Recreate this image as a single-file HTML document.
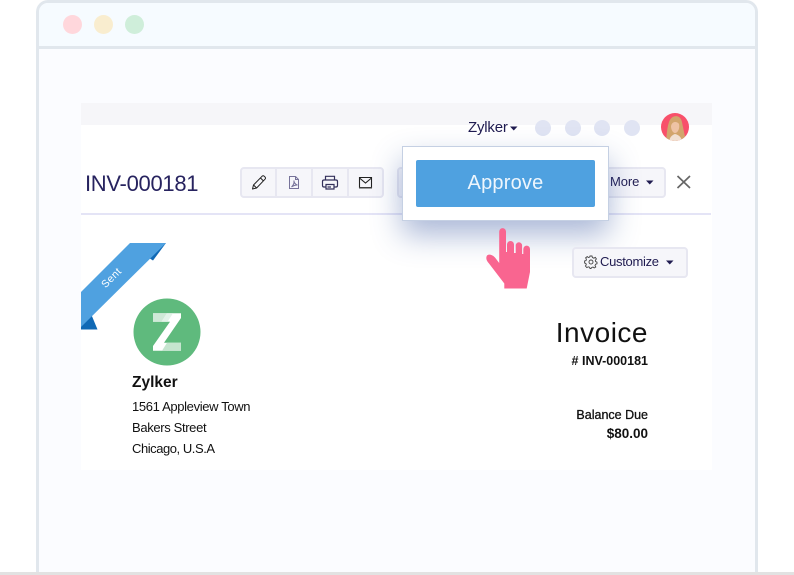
<!DOCTYPE html>
<html><head><meta charset="utf-8"><style>
html,body{margin:0;padding:0;background:#fff;width:794px;height:575px;overflow:hidden}
body{position:relative;font-family:"Liberation Sans",sans-serif}
div,span{position:absolute;box-sizing:border-box}
.t{white-space:nowrap;line-height:1}
.btn{background:#f6f6fa;border:2px solid #e7e7f1;border-radius:4px}
</style></head><body>
<div style="left:36px;top:0;width:722px;height:575px;background:#fbfcff;border:3px solid #e1e7ed;border-bottom:none;border-radius:12px 12px 0 0;overflow:hidden">
<div style="left:0;top:0;width:716px;height:43px;background:#f6fbff"></div>
<div style="left:0;top:43px;width:716px;height:3px;background:#e1e7ed"></div>
</div>
<div style="left:63px;top:15px;width:19px;height:19px;border-radius:50%;background:#ffd7dc"></div>
<div style="left:94px;top:15px;width:19px;height:19px;border-radius:50%;background:#f9edcf"></div>
<div style="left:125px;top:15px;width:19px;height:19px;border-radius:50%;background:#cfeeda"></div>
<div style="left:0;top:572px;width:794px;height:3px;background:#e2e2e2"></div>

<div style="left:81px;top:103px;width:631px;height:367px;background:#fff"></div>
<div style="left:81px;top:103px;width:631px;height:22px;background:#f6f6f9"></div>
<div style="left:81px;top:213px;width:630px;height:2px;background:#e4e4f6"></div>

<div class="t" style="left:468px;top:120px;font-size:15px;color:#1f1b50;letter-spacing:-.2px">Zylker</div>
<svg style="position:absolute;left:510px;top:126px" width="8" height="5"><path d="M0 0.5H7.5L3.75 4.5Z" fill="#1f1b50"/></svg>
<div style="left:535px;top:120px;width:16px;height:16px;border-radius:50%;background:#e0e4f3"></div>
<div style="left:565px;top:120px;width:16px;height:16px;border-radius:50%;background:#e0e4f3"></div>
<div style="left:594px;top:120px;width:16px;height:16px;border-radius:50%;background:#e0e4f3"></div>
<div style="left:624px;top:120px;width:16px;height:16px;border-radius:50%;background:#e0e4f3"></div>
<svg style="position:absolute;left:661px;top:113px" width="28" height="28" viewBox="0 0 28 28">
<defs><clipPath id="c"><circle cx="14" cy="14" r="14"/></clipPath></defs>
<g clip-path="url(#c)"><rect width="28" height="28" fill="#f8506a"/>
<path d="M5 28C6 20 6 15 8 9C10 3 15 2 18 4C21 6 21 10 22 14C23 19 24 24 25 28Z" fill="#d2a56c"/>
<path d="M10 13C11 8 16 8 18 11C19 15 17 20 14 20C12 20 10 17 10 13Z" fill="#eec3a4"/>
<path d="M8 28C9 24 11 22 14 21C18 22 20 24 21 28Z" fill="#f1e0d2"/></g></svg>

<div class="t" style="left:85px;top:173px;font-size:22px;color:#27235f;letter-spacing:-.3px">INV-000181</div>

<div class="btn" style="left:240px;top:167px;width:144px;height:31px"></div>
<div style="left:275px;top:168px;width:2px;height:29px;background:#e7e7f1"></div>
<div style="left:311px;top:168px;width:2px;height:29px;background:#e7e7f1"></div>
<div style="left:347px;top:168px;width:2px;height:29px;background:#e7e7f1"></div>
<svg style="position:absolute;left:240px;top:167px" width="144" height="31" viewBox="0 0 144 31" fill="none">
<path d="M12.5 22L13.5 18L22 9.3C22.8 8.6 23.6 8.6 24.3 9.3L25 10C25.7 10.7 25.7 11.5 25 12.2L16.6 21ZM20.5 11L23.5 14M13.5 18L16.6 21" stroke="#222" stroke-width="1" stroke-linejoin="round"/>
<path d="M49.5 9.5H55.5L58.5 12.5V21.5H49.5ZM55.5 9.5V12.5H58.5M51.5 20C53.5 18 54.5 15.5 53.8 13.5C54.2 16 55.5 17.5 57.5 18C55.5 18 53.5 18.5 51.5 20Z" stroke="#77739a" stroke-width="1"/>
<path d="M85.5 13V9.3H94.5V13M85.5 20H84C83 20 82.5 19.5 82.5 18.5V14.5C82.5 13.5 83 13 84 13H96C97 13 97.5 13.5 97.5 14.5V18.5C97.5 19.5 97 20 96 20H94.5M86 17.5H94V22H86ZM87.5 20H91" stroke="#33305a" stroke-width="1.2"/>
<path d="M119.5 10.5H131.5V20.5H119.5ZM119.5 11L125.5 16L131.5 11" stroke="#222" stroke-width="1.1"/><path d="M119 20.8H132" stroke="#444" stroke-width="1.4"/>
</svg>

<div class="btn" style="left:397px;top:167px;width:30px;height:31px"></div>
<div class="btn" style="left:590px;top:167px;width:76px;height:31px"></div>
<div class="t" style="left:610px;top:175px;font-size:13px;color:#1f1b50;letter-spacing:-.1px">More</div>
<svg style="position:absolute;left:646px;top:180px" width="8" height="5"><path d="M0 .5H7.5L3.75 4.5Z" fill="#1f1b50"/></svg>
<svg style="position:absolute;left:676px;top:174px" width="15" height="15"><path d="M1.5 2L14 14M14 2L1.5 14" stroke="#666" stroke-width="1.7"/></svg>

<div style="left:402px;top:146px;width:207px;height:75px;background:#fff;border:1px solid #c5d0e3;box-shadow:0 14px 30px rgba(55,85,160,.42)"></div>
<div style="left:416px;top:160px;width:179px;height:47px;background:#4fa1e0;border-radius:2px"></div>
<div class="t" style="left:416px;top:173px;width:179px;text-align:center;font-size:20px;color:#eef6fd;letter-spacing:.2px">Approve</div>

<svg style="position:absolute;left:480px;top:222px" width="60" height="70" viewBox="480 222 60 70">
<path d="M499.2 231.5a3.4 3.4 0 0 1 6.8 0V252H507V244.5a3.5 3.5 0 0 1 7 0V253H515.7V245.5a3.2 3.2 0 0 1 6.4 0V254H523.3V249a3.35 3.35 0 0 1 6.7 0V272L526.7 288.5H504.3V283.5L489 263.5C486.5 261 485.5 258 487 255.5C489 253.5 493 255 495 257.5L499.2 263Z" fill="#f96590"/></svg>

<div class="btn" style="left:572px;top:247px;width:116px;height:31px"></div>
<svg style="position:absolute;left:584px;top:255px" width="14" height="14" viewBox="0 0 14 14" fill="none" stroke="#444" stroke-width=".9"><circle cx="7" cy="7" r="2"/><path d="M6 1H8L8.4 2.6L9.9 3.2L11.3 2.4L12.4 4L11.3 5.2L11.6 6.6L13 7.2V8.8L11.6 9.2L11 10.6L11.8 12L10.2 13L9 12L7.6 12.6L7 13.5H6L5.6 12.2L4.2 11.8L2.8 12.6L1.4 11L2.3 9.8L1.8 8.4L.6 8V6L2 5.6L2.4 4.2L1.6 2.9L3.2 1.6L4.4 2.5L5.7 2Z"/></svg>
<div class="t" style="left:600px;top:255px;font-size:13px;color:#1f1b50;letter-spacing:-.3px">Customize</div>
<svg style="position:absolute;left:666px;top:260px" width="8" height="5"><path d="M0 .5H7.5L3.75 4.5Z" fill="#1f1b50"/></svg>

<svg style="position:absolute;left:81px;top:243px" width="90" height="90" viewBox="0 0 90 90">
<path d="M0 86.5H16.5L10.5 72L0 82Z" fill="#1069b5"/>
<path d="M85 0L72 17.5L68 15L62 7Z" fill="#1069b5"/>
<path d="M49 0H85L0 84V49Z" fill="#4fa1e0"/>
<text x="0" y="0" transform="translate(24.5,45.5) rotate(-45)" font-family="Liberation Sans,sans-serif" font-size="10.5" fill="#fff" letter-spacing=".5">Sent</text>
</svg>

<svg style="position:absolute;left:133px;top:298px" width="68" height="68" viewBox="0 0 68 68">
<circle cx="34" cy="34" r="33.5" fill="#5fba7d"/>
<path d="M20 15.3H48V20L31 44.7H48V52.7H20V48L37 23.8H20Z" fill="#fff"/>
<path d="M20 15.3H34L28.5 23.8H20Z" fill="#cfe9d7"/><path d="M34 15.3H40L34.5 23.8H28.5Z" fill="#e3f3e9"/>
<path d="M34 44.7H48V52.7H29Z" fill="#c5e5cf"/>
</svg>

<div class="t" style="left:132px;top:375px;font-size:15.5px;font-weight:bold;color:#111">Zylker</div>
<div class="t" style="left:132px;top:400px;font-size:13px;color:#111;letter-spacing:-.35px">1561 Appleview Town</div>
<div class="t" style="left:132px;top:421px;font-size:13px;color:#111;letter-spacing:-.35px">Bakers Street</div>
<div class="t" style="left:132px;top:442px;font-size:13px;color:#111;letter-spacing:-.45px">Chicago, U.S.A</div>

<div class="t" style="right:146px;top:319px;font-size:28px;color:#111;letter-spacing:.5px">Invoice</div>
<div class="t" style="right:146px;top:355px;font-size:12.5px;font-weight:bold;color:#111">&#35; INV-000181</div>
<div class="t" style="right:146px;top:409px;font-size:12.5px;color:#111;-webkit-text-stroke:.3px #111">Balance Due</div>
<div class="t" style="right:146px;top:427px;font-size:13.5px;font-weight:bold;color:#111">$80.00</div>
</body></html>
